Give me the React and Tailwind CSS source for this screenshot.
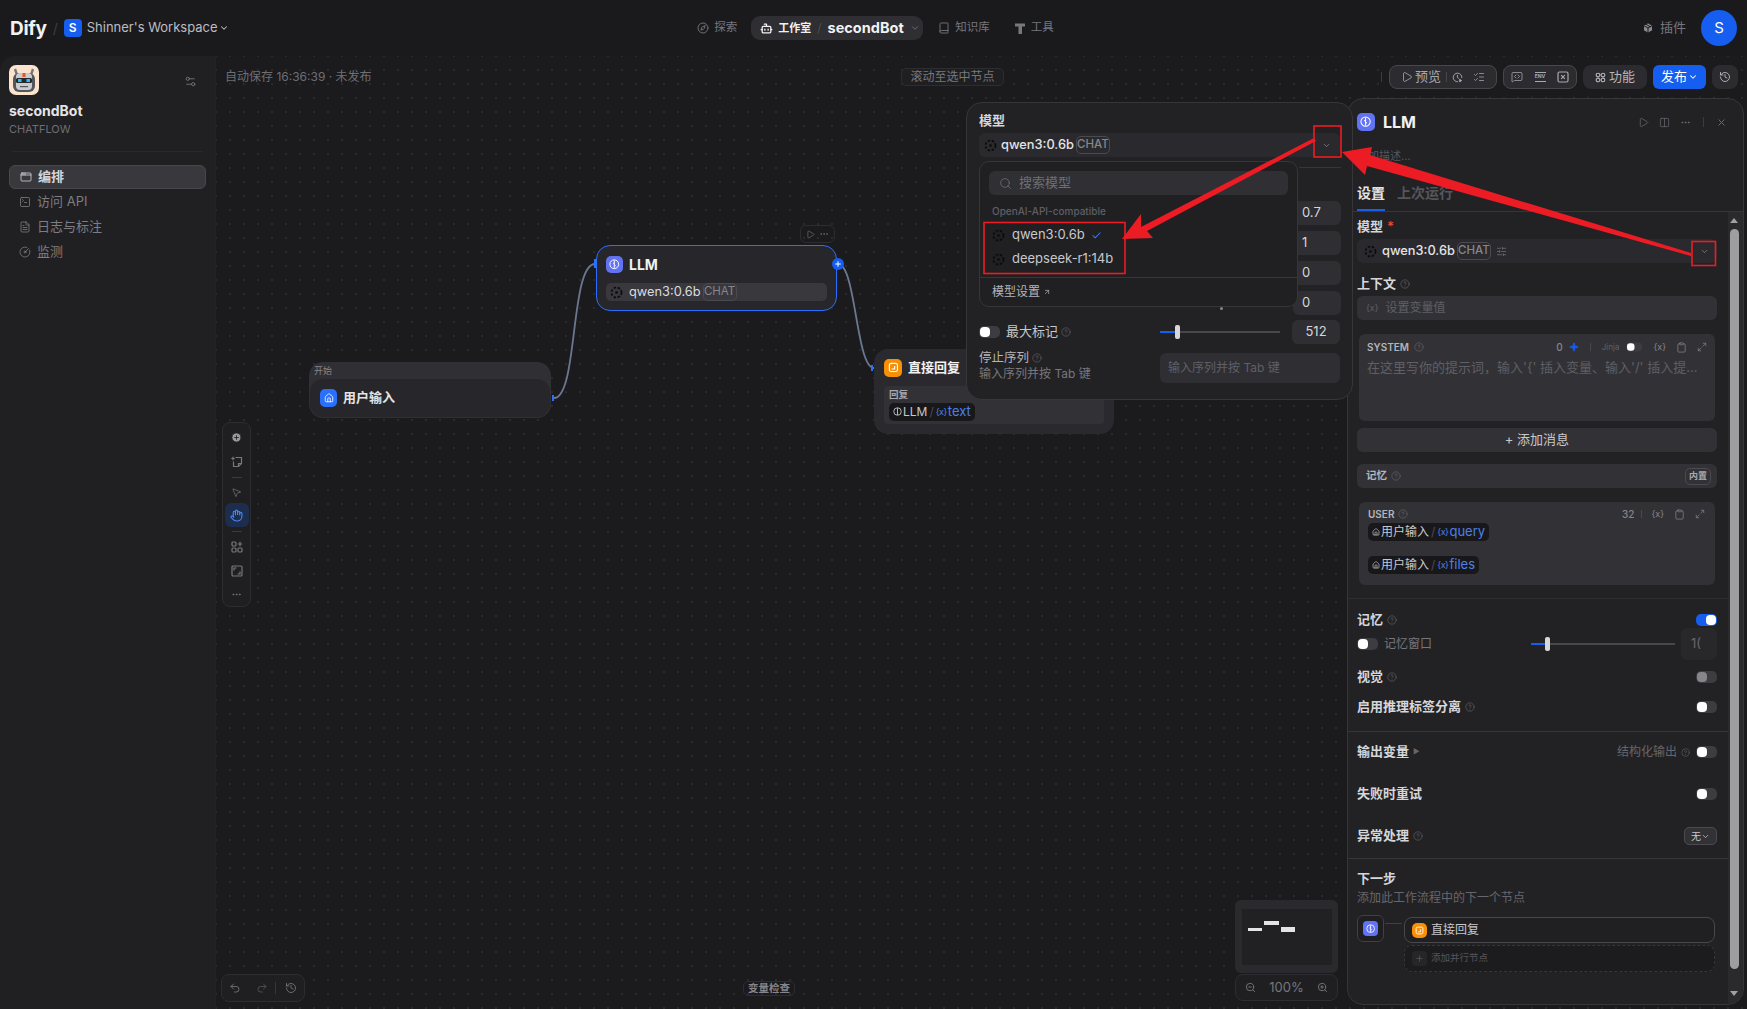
import {
  AppWindow,
  ArrowUpRight,
  Book,
  Bot,
  Check,
  ChevronDown,
  CircleGauge,
  CircleHelp,
  CirclePlus,
  Clipboard,
  Columns2,
  Compass,
  Ellipsis,
  FileText,
  Hand,
  History,
  House,
  ListChecks,
  Maximize2,
  MessageSquareCode,
  MousePointer2,
  Package,
  Play,
  Plus,
  Redo2,
  Search,
  Settings2,
  SlidersHorizontal,
  Sparkle,
  SquareTerminal,
  Undo2,
  X,
  ZoomIn,
  ZoomOut,
} from "lucide-react";

function ModelIcon({ size = 16 }) {
  return (
    <svg width={size} height={size} viewBox="0 0 16 16" fill="none" className="shrink-0">
      <circle cx="8" cy="8" r="6.2" stroke="#0b0b0d" strokeWidth="2" strokeDasharray="3 2" />
      <circle cx="8" cy="8" r="1.6" fill="#0b0b0d" />
    </svg>
  );
}

function LlmIcon({ size = 18, radius = "rounded-[5px]" }) {
  return (
    <span
      className={`flex shrink-0 items-center justify-center bg-[#6172f3] ${radius}`}
      style={{ width: size, height: size }}
    >
      <svg width={size * 0.62} height={size * 0.62} viewBox="0 0 12 12" fill="none" stroke="#fff">
        <circle cx="6" cy="6" r="5" strokeWidth="1.1" />
        <path d="M6 1.5v9M6 4l-1.5 1.5M6 6.5l1.5 1.2" strokeWidth="1.1" />
      </svg>
    </span>
  );
}

function AnswerIcon({ size = 18 }) {
  return (
    <span
      className="flex shrink-0 items-center justify-center rounded-[5px] bg-[#f79009]"
      style={{ width: size, height: size }}
    >
      <svg width={size * 0.6} height={size * 0.6} viewBox="0 0 12 12" fill="none" stroke="#fff" strokeWidth="1.2">
        <rect x="1.5" y="1.5" width="9" height="9" rx="2" />
        <path d="M4 7.8h3.4V4.4" />
      </svg>
    </span>
  );
}

function ToolsGlyph() {
  return (
    <svg width="12" height="13" viewBox="0 0 12 13" fill="#77777e">
      <path d="M1 1.5h10v3H8v7.5H4.5V4.5H1z" />
    </svg>
  );
}

function FeatureGlyph({ size = 12 }) {
  return (
    <svg width={size} height={size} viewBox="0 0 12 12" fill="none" stroke="currentColor" strokeWidth="1.2">
      <circle cx="3.3" cy="3.3" r="2" />
      <circle cx="8.7" cy="3.3" r="2" />
      <circle cx="3.3" cy="8.7" r="2" />
      <circle cx="8.7" cy="8.7" r="2" />
    </svg>
  );
}

function ClockPlay() {
  return (
    <svg width="13" height="13" viewBox="0 0 13 13" fill="none" stroke="currentColor" strokeWidth="1.1">
      <path d="M7 11.4A5 5 0 1 1 11.4 7" />
      <path d="M6.3 3.5v3l1.6 1" />
      <path d="M9 8.6v3l2.2-1.5z" fill="currentColor" />
    </svg>
  );
}

function BoxX() {
  return (
    <svg width="12" height="12" viewBox="0 0 12 12" fill="none" stroke="currentColor" strokeWidth="1.2">
      <rect x="1" y="1" width="10" height="10" rx="1.5" />
      <path d="M4.2 4.2l3.6 3.6M7.8 4.2L4.2 7.8" />
    </svg>
  );
}

function AddNote() {
  return (
    <svg width="12" height="12" viewBox="0 0 12 12" fill="none" stroke="currentColor" strokeWidth="1.2">
      <path d="M4.5 1.5h6v6l-3 3H2.5V5.5" />
      <path d="M7.5 10.5v-3h3M2 0.8v3.4M0.3 2.5h3.4" />
    </svg>
  );
}

function BlocksGlyph() {
  return (
    <svg width="12" height="12" viewBox="0 0 12 12" fill="none" stroke="currentColor" strokeWidth="1.2">
      <rect x="1" y="1" width="4" height="4" rx="1" />
      <rect x="1" y="7" width="4" height="4" rx="1" />
      <rect x="7" y="7" width="4" height="4" rx="1" />
      <path d="M9 0.8v4.4M6.8 3h4.4" />
    </svg>
  );
}

function FitGlyph() {
  return (
    <svg width="12" height="12" viewBox="0 0 12 12" fill="none" stroke="currentColor" strokeWidth="1.2">
      <rect x="1" y="1" width="10" height="10" rx="1" />
      <path d="M3 5.5V3h2.5M9 6.5V9H6.5" />
    </svg>
  );
}

function Help({ size = 12 }) {
  return <CircleHelp size={size} strokeWidth={1.5} className="shrink-0 text-[#66666c]" />;
}

function Chat() {
  return (
    <span className="flex h-[18px] w-[34px] shrink-0 items-center justify-center rounded-[5px] border border-[#4a4a50] text-[11.5px] text-[#86868c]">
      CHAT
    </span>
  );
}

function Toggle({ on = false, dim = false }) {
  return (
    <span
      className={`flex h-3 w-[21px] shrink-0 items-center rounded-[5px] px-[1px] ${
        on ? "justify-end bg-[#155eef]" : "justify-start bg-[#3c3c41]"
      }`}
    >
      <span className={`h-[10px] w-[10px] rounded-[4px] ${dim ? "bg-[#85858a]" : "bg-white"}`} />
    </span>
  );
}

function Slider({ width, at }) {
  return (
    <span className="relative flex h-3 shrink-0 items-center" style={{ width }}>
      <span className="h-[2px] w-full bg-[#47474c]" />
      <span className="absolute left-0 h-[2px] bg-[#155eef]" style={{ width: at }} />
      <span
        className="absolute h-[14px] w-[5px] rounded-[2px] bg-[#d8d8da]"
        style={{ left: at - 2 }}
      />
    </span>
  );
}

function VarTag({ icon, name, label }) {
  return (
    <span className="flex h-[18px] w-fit items-center gap-[1px] rounded-[5px] bg-[#18181b] px-[4px] text-[12px] text-[#c8c8cc]">
      {icon}
      <span>{name}</span>
      <span className="mx-[1px] text-[#4c4c52]">/</span>
      <span className="text-[9px] tracking-[-0.5px] text-[#4f80e8]">{"{x}"}</span>
      <span className="text-[13px] text-[#4f80e8]">{label}</span>
    </span>
  );
}

function NavItem({ icon: Icon, children, active = false }) {
  return (
    <div
      className={`flex h-6 items-center gap-[6px] rounded-[6px] px-[10px] text-[13px] ${
        active ? "border border-[#47474c] bg-[#38383d] font-semibold text-[#d6d6da]" : "text-[#7d7d84]"
      }`}
    >
      <Icon size={12} strokeWidth={1.6} />
      <span>{children}</span>
    </div>
  );
}

function TopLink({ icon, children }) {
  return (
    <div className="flex items-center gap-[5px] text-[11.5px] text-[#77777e]">
      {icon}
      <span>{children}</span>
    </div>
  );
}

function Header() {
  return (
    <header className="grid h-14 shrink-0 grid-cols-[1fr_auto_1fr] items-center bg-[#1a1a1d] pl-[10px] pr-[10px]">
      <div className="flex items-center">
        <span className="text-[19px] font-bold leading-none tracking-[-0.3px] text-[#f2f2f2]">Dify</span>
        <span className="mx-[6px] text-[14px] text-[#3d3d42]">/</span>
        <span className="flex h-[18px] w-[18px] items-center justify-center rounded-[4px] bg-[#155eef] text-[12px] font-semibold text-white">
          S
        </span>
        <span className="ml-[5px] text-[13px] text-[#bdbdc2]">Shinner's Workspace</span>
        <ChevronDown size={10} strokeWidth={2.5} className="ml-[1px] text-[#bdbdc2]" />
      </div>
      <div className="ml-[4px] flex items-center">
        <TopLink icon={<Compass size={12} strokeWidth={1.8} />}>探索</TopLink>
        <div className="ml-[14px] flex h-6 w-[172px] shrink-0 items-center rounded-[9px] bg-[#2f2f33] px-[9px] text-[#f2f2f2]">
          <Bot size={13} strokeWidth={2.4} className="shrink-0" />
          <span className="ml-[5px] text-[11px] font-semibold">工作室</span>
          <span className="mx-[6px] text-[12px] text-[#4c4c52]">/</span>
          <span className="text-[14.5px] font-bold">secondBot</span>
          <ChevronDown size={10} className="ml-[6px] shrink-0 text-[#77777e]" />
        </div>
        <div className="ml-[15px]">
          <TopLink icon={<Book size={12} strokeWidth={1.8} />}>知识库</TopLink>
        </div>
        <div className="ml-[24px]">
          <TopLink icon={<ToolsGlyph />}>工具</TopLink>
        </div>
      </div>
      <div className="flex items-center justify-end">
        <Package size={12} fill="#8a8a90" className="text-[#1a1a1d]" />
        <span className="ml-[6px] text-[13px] text-[#77777e]">插件</span>
        <span className="ml-[15px] flex h-9 w-9 items-center justify-center rounded-full bg-[#155eef] text-[15px] text-white">
          S
        </span>
      </div>
    </header>
  );
}

function Sidebar() {
  return (
    <aside className="flex w-[216px] shrink-0 flex-col rounded-tl-[14px] border-r border-[#232326] bg-[#202023]">
      <div className="flex items-start justify-between pl-[9px] pr-[18px] pt-[9px]">
        <svg width="30" height="30" viewBox="0 0 30 30" className="rounded-[7px]">
          <rect width="30" height="30" fill="#fbe3cd" />
          <path d="M6 4l2 6M24 4l-2 6" stroke="#77777c" strokeWidth="2.4" />
          <rect x="4" y="8" width="22" height="19" rx="6" fill="#54565b" />
          <rect x="7" y="8" width="16" height="17" rx="4" fill="#c9cbce" />
          <rect x="13.5" y="8" width="3" height="4" fill="#e4572e" />
          <rect x="7" y="13" width="16" height="5" rx="1.5" fill="#26282c" />
          <rect x="9" y="14" width="3.5" height="3" fill="#27c0e8" />
          <rect x="17.5" y="14" width="3.5" height="3" fill="#27c0e8" />
          <rect x="11" y="21" width="8" height="1.2" fill="#55575c" />
        </svg>
        <Settings2 size={13} strokeWidth={1.6} className="mt-[10px] text-[#77777e]" />
      </div>
      <div className="mt-[6px] pl-[9px] text-[14px] font-bold leading-5 text-[#e4e4e6]">secondBot</div>
      <div className="pl-[9px] text-[11px] leading-4 text-[#6e6e74]">CHATFLOW</div>
      <div className="mx-[12px] mt-[14px] h-px bg-[#2a2a2e]" />
      <nav className="mt-[13px] flex flex-col gap-[1px] pl-[9px] pr-[9px]">
        <NavItem icon={AppWindow} active>
          编排
        </NavItem>
        <NavItem icon={SquareTerminal}>访问 API</NavItem>
        <NavItem icon={FileText}>日志与标注</NavItem>
        <NavItem icon={CircleGauge}>监测</NavItem>
      </nav>
    </aside>
  );
}

function ToolGroup({ children, className = "" }) {
  return (
    <div className={`flex h-6 items-center rounded-[8px] border border-[#47474c] bg-[#2c2c30] text-[#a8a8ae] ${className}`}>
      {children}
    </div>
  );
}

function TopToolbar() {
  return (
    <div className="absolute right-[9px] top-[9px] flex items-center gap-[6px]">
      <span className="mr-[1px] h-[10px] w-px bg-[#3a3a3f]" />
      <ToolGroup className="w-[108px] px-[11px]">
        <Play size={12} strokeWidth={1.6} className="shrink-0" />
        <span className="ml-[2px] text-[13px]">预览</span>
        <span className="mx-[5px] h-[10px] w-px bg-[#47474c]" />
        <ClockPlay />
        <ListChecks size={12} strokeWidth={1.5} className="ml-[10px] shrink-0" />
      </ToolGroup>
      <ToolGroup className="w-[74px] justify-between px-[7px]">
        <MessageSquareCode size={12} strokeWidth={1.5} />
        <span className="flex h-[10px] w-[11px] items-center justify-center border-y border-[#a8a8ae] text-[5px] font-bold">
          ENV
        </span>
        <BoxX />
      </ToolGroup>
      <div className="flex h-6 w-16 items-center justify-center gap-[3px] rounded-[8px] bg-[#2c2c30] text-[13px] text-[#b4b4ba]">
        <FeatureGlyph size={11} />
        <span>功能</span>
      </div>
      <div className="flex h-6 w-[53px] items-center justify-center gap-[1px] rounded-[6px] bg-[#155eef] text-[13px] text-white">
        <span>发布</span>
        <ChevronDown size={10} strokeWidth={2.5} />
      </div>
      <div className="flex h-6 w-[26px] items-center justify-center rounded-[8px] bg-[#2c2c30] text-[#c0c0c5]">
        <History size={12} strokeWidth={1.7} />
      </div>
    </div>
  );
}

function SideTools() {
  return (
    <div className="absolute left-[6px] top-[366px] flex h-[185px] w-[29px] flex-col items-center rounded-[8px] border border-[#2d2d31] bg-[#1f1f22] pt-[9px] text-[#77777e]">
      <CirclePlus size={11} fill="#9a9a9e" className="text-[#26262a]" />
      <span className="mt-[13px]">
        <AddNote />
      </span>
      <span className="mt-[9px] h-px w-[10px] bg-[#3a3a3f]" />
      <MousePointer2 size={11} strokeWidth={1.5} className="mt-[9px]" />
      <span className="mt-[5px] flex h-6 w-6 items-center justify-center rounded-[6px] bg-[#1d2d4d] text-[#4c86f7]">
        <Hand size={13} strokeWidth={2} />
      </span>
      <span className="mt-[4px] h-px w-[10px] bg-[#3a3a3f]" />
      <span className="mt-[9px]">
        <BlocksGlyph />
      </span>
      <span className="mt-[12px]">
        <FitGlyph />
      </span>
      <Ellipsis size={11} className="mt-[12px]" />
    </div>
  );
}

function StartNode() {
  return (
    <div className="absolute left-[93px] top-[306px] flex h-14 w-[242px] flex-col rounded-[14px] bg-[#2f2f34] p-[1px]">
      <div className="h-4 pl-[4px] text-[9px] leading-4 text-[#85858b]">开始</div>
      <div className="flex flex-1 items-center gap-[6px] rounded-[13px] bg-[#27272b] pl-[10px]">
        <span className="flex h-[18px] w-[17px] items-center justify-center rounded-[5px] bg-[#2970ff]">
          <House size={10} className="text-white" />
        </span>
        <span className="text-[13px] font-semibold text-[#e4e4e6]">用户输入</span>
      </div>
    </div>
  );
}

function LlmNode() {
  return (
    <>
      <div className="absolute left-[584px] top-[169px] flex h-[18px] w-[35px] items-center justify-center gap-[4px] rounded-[6px] border border-[#2d2d31] text-[#66666c]">
        <Play size={9} />
        <Ellipsis size={10} />
      </div>
      <div className="absolute left-[380px] top-[189px] flex h-[66px] w-[241px] flex-col gap-[8px] rounded-[14px] border-[1.5px] border-[#2970ff] bg-[#27272b] px-[9px] pt-[8px]">
        <div className="flex items-center gap-[6px]">
          <LlmIcon size={17} />
          <span className="text-[14px] font-bold text-[#f2f2f2]">LLM</span>
        </div>
        <div className="flex h-[18px] items-center gap-[2px] rounded-[5px] bg-[#38383d] pl-[4px] text-[12.8px] text-[#dcdce0]">
          <ModelIcon size={13} />
          <span className="ml-[4px]">qwen3:0.6b</span>
          <Chat />
        </div>
      </div>
      <span className="absolute left-[616px] top-[202px] flex h-3 w-3 items-center justify-center rounded-full bg-[#155eef] text-white">
        <Plus size={8} strokeWidth={3} />
      </span>
      <span className="absolute left-[378px] top-[203px] h-[9px] w-[2px] bg-[#2970ff]" />
      <span className="absolute left-[336px] top-[339px] h-[6px] w-[2px] bg-[#2970ff]" />
    </>
  );
}

function AnswerNode() {
  return (
    <div className="absolute left-[658px] top-[293px] h-[85px] w-[240px] rounded-[14px] bg-[#2a2a2e] px-[10px] pt-[9px]">
      <span className="absolute -left-[3px] top-[16px] h-[6px] w-[2px] bg-[#2970ff]" />
      <div className="flex items-center gap-[6px]">
        <AnswerIcon size={18} />
        <span className="text-[13px] font-semibold text-[#f2f2f2]">直接回复</span>
      </div>
      <div className="mt-[8px] h-[38px] rounded-[4px] bg-[#323236] pl-[5px] pt-[1px]">
        <div className="text-[9.5px] font-semibold leading-[16px] text-[#a8a8ae]">回复</div>
        <VarTag icon={<LlmGlyph />} name="LLM" label="text" />
      </div>
    </div>
  );
}

function LlmGlyph() {
  return (
    <svg width="9" height="9" viewBox="0 0 12 12" fill="none" stroke="#c8c8cc" strokeWidth="1.2">
      <circle cx="6" cy="6" r="5" />
      <path d="M6 1.5v9" />
    </svg>
  );
}

function ParamRow({ value, top }) {
  return (
    <span
      className="absolute right-[11px] flex h-6 w-12 items-center rounded-[6px] bg-[#2f2f33] pl-[9px] text-[13px] text-[#d6d6da]"
      style={{ top }}
    >
      {value}
    </span>
  );
}

function ModelPopup() {
  return (
    <div className="absolute left-[750px] top-[46px] z-20 h-[298px] w-[387px] rounded-[16px] border border-[#36363a] bg-[#222225] px-[12px] pt-[8px]">
      <div className="text-[13px] font-semibold leading-[18px] text-[#d6d6da]">模型</div>
      <div className="mt-[4px] flex h-6 items-center rounded-[6px] bg-[#2a2a2e] pl-[5px] text-[12.8px] font-medium text-[#e4e4e6]">
        <ModelIcon size={13} />
        <span className="ml-[4px] mr-[2px]">qwen3:0.6b</span>
        <Chat />
        <ChevronDown size={9} className="ml-auto mr-[9px] text-[#85858b]" />
      </div>

      <ParamRow value="0.7" top={98} />
      <ParamRow value="1" top={128} />
      <ParamRow value="0" top={158} />
      <ParamRow value="0" top={188} />
      <span className="absolute right-[11px] top-[64px] h-px w-[42px] bg-[#36363a]" />
      <span className="absolute left-[253px] top-[204px] h-[3px] w-[3px] rounded-full bg-[#85858b]" />

      <div className="relative z-10 mt-[4px] flex h-[146px] w-[319px] flex-col rounded-[10px] border border-[#36363a] bg-[#202023]">
        <div className="mx-[9px] mt-[9px] flex h-6 items-center rounded-[6px] bg-[#303034] pl-[10px] text-[13px] text-[#6e6e74]">
          <Search size={13} strokeWidth={1.5} />
          <span className="ml-[7px]">搜索模型</span>
        </div>
        <div className="ml-[12px] mt-[9px] text-[10px] font-medium leading-[14px] text-[#5f5f66]">
          OpenAI-API-compatible
        </div>
        <div className="mt-[5px] flex h-6 items-center pl-[12px] text-[13px] text-[#c8c8cc]">
          <ModelIcon size={13} />
          <span className="ml-[7px]">qwen3:0.6b</span>
          <Check size={11} strokeWidth={2.2} className="ml-[6px] text-[#3b7bf6]" />
        </div>
        <div className="flex h-6 items-center pl-[12px] text-[13px] text-[#c8c8cc]">
          <ModelIcon size={13} />
          <span className="ml-[7px]">deepseek-r1:14b</span>
        </div>
        <div className="mt-[6px] h-px bg-[#36363a]" />
        <div className="flex flex-1 items-center gap-[3px] pl-[12px] text-[12px] text-[#b4b4ba]">
          <span>模型设置</span>
          <ArrowUpRight size={8} strokeWidth={2} />
        </div>
      </div>

      <div className="mt-[13px] flex h-6 items-center">
        <Toggle />
        <span className="ml-[6px] mr-[3px] text-[13px] text-[#c8c8cc]">最大标记</span>
        <Help size={10} />
        <span className="ml-auto mr-[12px]">
          <Slider width={120} at={17} />
        </span>
        <span className="flex h-6 w-12 items-center justify-center rounded-[6px] bg-[#2f2f33] text-[13px] text-[#d6d6da]">
          512
        </span>
      </div>
      <div className="mt-[5px] flex items-start">
        <div className="w-[181px]">
          <div className="flex items-center gap-[3px] text-[12.5px] leading-[17px] text-[#b4b4ba]">
            停止序列 <Help size={10} />
          </div>
          <div className="text-[12px] leading-[16px] text-[#77777e]">输入序列并按 Tab 键</div>
        </div>
        <div className="mt-[4px] flex h-[30px] flex-1 items-center rounded-[6px] bg-[#2f2f33] pl-[8px] text-[12px] text-[#5f5f66]">
          输入序列并按 Tab 键
        </div>
      </div>
    </div>
  );
}

function PanelRow({ label, help = true, right, className = "" }) {
  return (
    <div className={`flex h-5 items-center justify-between ${className}`}>
      <div className="flex items-center gap-[4px] text-[13px] font-semibold text-[#d6d6da]">
        {label}
        {help && <Help size={10} />}
      </div>
      {right}
    </div>
  );
}

function EditorIcons() {
  return (
    <div className="flex items-center gap-[10px] text-[#85858b]">
      <span className="text-[9px]">{"{x}"}</span>
      <Clipboard size={11} strokeWidth={1.6} />
      <Maximize2 size={10} strokeWidth={1.6} />
    </div>
  );
}

function LlmPanel() {
  return (
    <div className="absolute left-[1131px] top-[42px] z-10 flex h-[907px] w-[397px] flex-col rounded-[16px] border border-[#36363a] bg-[#222225]">
      <div className="shrink-0 px-[9px] pt-[14px]">
        <div className="flex h-[18px] items-center">
          <LlmIcon size={18} />
          <span className="ml-[8px] text-[16px] font-bold text-[#f2f2f2]">LLM</span>
          <div className="ml-auto flex items-center text-[#6e6e74]">
            <Play size={11} strokeWidth={1.5} />
            <Columns2 size={11} strokeWidth={1.5} className="ml-[10px]" />
            <Ellipsis size={11} className="ml-[10px]" />
            <span className="mx-[12px] h-[10px] w-px bg-[#3a3a3f]" />
            <X size={11} className="mr-[7px]" />
          </div>
        </div>
        <div className="mt-[15px] h-5 text-[11px] leading-5 text-[#55555b]">添加描述...</div>
        <div className="mt-[16px] flex h-[29px] gap-[12px] text-[14px] font-semibold">
          <span className="h-full border-b-[2px] border-[#155eef] text-[#e4e4e6]">设置</span>
          <span className="text-[#55555b]">上次运行</span>
        </div>
      </div>
      <div className="h-px shrink-0 bg-[#36363a]" />

      <div className="flex min-h-0 flex-1">
        <div className="min-w-0 flex-1 overflow-hidden pl-[9px] pr-[11px]">
          <div className="mt-[5px] flex h-5 items-center gap-[4px] text-[13px] font-semibold text-[#d6d6da]">
            模型 <span className="text-[#f04438]">*</span>
          </div>
          <div className="mt-[2px] flex h-6 items-center rounded-[6px] bg-[#2a2a2e] pl-[7px] text-[12.8px] font-medium text-[#e4e4e6]">
            <ModelIcon size={13} />
            <span className="ml-[5px] mr-[2px]">qwen3:0.6b</span>
            <Chat />
            <SlidersHorizontal size={11} strokeWidth={1.5} className="ml-[5px] text-[#77777e]" />
            <ChevronDown size={9} className="ml-auto mr-[8px] text-[#85858b]" />
          </div>

          <PanelRow label="上下文" className="mt-[11px]" />
          <div className="mt-[2px] flex h-6 items-center rounded-[6px] bg-[#323236] pl-[9px] text-[12px] text-[#5f5f66]">
            <span className="mr-[7px] text-[9px]">{"{x}"}</span>设置变量值
          </div>

          <div className="mx-[2px] mt-[14px] h-[87px] rounded-[6px] bg-[#323236] px-[8px] pt-[5px]">
            <div className="flex h-4 items-center justify-between">
              <div className="flex items-center gap-[5px] text-[10px] font-semibold text-[#b4b4ba]">
                SYSTEM <Help size={10} />
              </div>
              <div className="flex items-center">
                <span className="text-[10px] font-medium text-[#85858b]">0</span>
                <Sparkle size={10} fill="#155eef" className="ml-[6px] text-[#155eef]" />
                <span className="mx-[11px] h-[8px] w-px bg-[#47474c]" />
                <span className="mr-[2px] text-[8px] text-[#5f5f66]">Jinja</span>
                <span className="mr-[11px] origin-right scale-75">
                  <Toggle />
                </span>
                <EditorIcons />
              </div>
            </div>
            <div className="mt-[2px] text-[13px] leading-5 text-[#5f5f66]">
              在这里写你的提示词，输入'{"{"}' 插入变量、输入'/' 插入提...
            </div>
          </div>

          <div className="mt-[7px] flex h-6 items-center justify-center gap-[5px] rounded-[6px] bg-[#323236] text-[13px] text-[#c8c8cc]">
            + 添加消息
          </div>

          <div className="mt-[12px] flex h-6 items-center justify-between rounded-[6px] bg-[#323236] pl-[9px] pr-[6px]">
            <div className="flex items-center gap-[4px] text-[10.5px] font-semibold text-[#b4b4ba]">
              记忆 <Help size={10} />
            </div>
            <span className="flex h-[17px] w-[26px] items-center justify-center rounded-[5px] border border-[#4a4a50] text-[9px] font-semibold text-[#a8a8ae]">
              内置
            </span>
          </div>

          <div className="mx-[2px] mt-[14px] h-[83px] rounded-[6px] bg-[#323236] px-[9px] pt-[4px]">
            <div className="flex h-4 items-center justify-between pr-[1px]">
              <div className="flex items-center gap-[4px] text-[10px] font-semibold text-[#b4b4ba]">
                USER <Help size={10} />
              </div>
              <div className="flex items-center">
                <span className="text-[10px] font-medium text-[#85858b]">32</span>
                <span className="ml-[7px] mr-[9px] h-[8px] w-px bg-[#47474c]" />
                <EditorIcons />
              </div>
            </div>
            <div className="mt-[1px]">
              <VarTag icon={<House size={8} />} name="用户输入" label="query" />
            </div>
            <div className="mt-[15px]">
              <VarTag icon={<House size={8} />} name="用户输入" label="files" />
            </div>
          </div>

          <div className="-ml-[9px] -mr-[11px] mt-[13px] h-px bg-[#2d2d31]" />

          <PanelRow label="记忆" className="mt-[11px]" right={<Toggle on />} />
          <div className="-mt-[2px] flex h-8 items-center">
            <Toggle />
            <span className="ml-[6px] text-[12px] text-[#77777e]">记忆窗口</span>
            <span className="ml-auto mr-[6px]">
              <Slider width={144} at={16} />
            </span>
            <span className="flex h-8 w-9 items-center rounded-[6px] bg-[#28282b] pl-[10px] text-[13px] text-[#66666c]">
              1(
            </span>
          </div>
          <PanelRow label="视觉" className="mt-[7px]" right={<Toggle dim />} />
          <PanelRow label="启用推理标签分离" className="mt-[10px]" right={<Toggle />} />

          <div className="-ml-[9px] -mr-[11px] mt-[14px] h-px bg-[#36363a]" />

          <PanelRow
            label={
              <>
                输出变量
                <span className="text-[7px] text-[#66666c]">▶</span>
              </>
            }
            help={false}
            className="mt-[10px]"
            right={
              <div className="flex items-center gap-[4px] text-[12px] text-[#66666c]">
                结构化输出
                <Help size={9} />
                <span className="ml-[2px]">
                  <Toggle />
                </span>
              </div>
            }
          />
          <PanelRow label="失败时重试" help={false} className="mt-[22px]" right={<Toggle />} />
          <PanelRow
            label="异常处理"
            className="mt-[22px]"
            right={
              <span className="flex h-[18px] w-[33px] items-center justify-center rounded-[5px] border border-[#4a4a50] bg-[#323236] text-[10px] text-[#c8c8cc]">
                无<ChevronDown size={9} />
              </span>
            }
          />

          <div className="-ml-[9px] -mr-[11px] mt-[12px] h-px bg-[#36363a]" />

          <div className="mt-[9px] text-[13px] font-semibold leading-5 text-[#d6d6da]">下一步</div>
          <div className="mt-[1px] text-[12px] leading-[18px] text-[#66666c]">添加此工作流程中的下一个节点</div>

          <div className="mt-[8px] flex items-start">
            <span className="flex h-[27px] w-[27px] shrink-0 items-center justify-center rounded-[6px] border border-[#3f3f44] bg-[#1f1f22]">
              <LlmIcon size={15} radius="rounded-[4px]" />
            </span>
            <span className="ml-[1px] mr-[2px] mt-[8px] h-px w-[17px] bg-[#3f3f44]" />
            <div className="mt-[2px] flex flex-1 flex-col gap-[2px] pr-[2px]">
              <div className="flex h-[26px] items-center gap-[4px] rounded-[8px] border border-[#47474c] bg-[#202023] pl-[7px] text-[12px] text-[#c8c8cc]">
                <AnswerIcon size={15} />
                直接回复
              </div>
              <div className="flex h-[27px] items-center gap-[4px] rounded-[8px] border border-dashed border-[#36363a] bg-[#1c1c1f] pl-[7px] text-[9.5px] text-[#55555b]">
                <span className="flex h-[15px] w-[15px] items-center justify-center rounded-[4px] bg-[#26262a]">
                  <Plus size={9} />
                </span>
                添加并行节点
              </div>
            </div>
          </div>
        </div>

        <div className="flex w-[15px] shrink-0 flex-col items-center rounded-br-[16px] bg-[#2a2a2d] pr-[3px]">
          <span className="mt-[6px] h-0 w-0 border-x-[4px] border-b-[5px] border-x-transparent border-b-[#a0a0a0]" />
          <span className="mt-[6px] h-[740px] w-[9px] shrink-0 rounded-full bg-[#9e9e9e]" />
          <span className="mt-[22px] h-0 w-0 border-x-[4px] border-t-[5px] border-x-transparent border-t-[#a0a0a0]" />
        </div>
      </div>
    </div>
  );
}

function BottomBits() {
  return (
    <>
      <div className="absolute left-[5px] top-[918px] flex h-7 w-[84px] items-center rounded-[8px] border border-[#2d2d31] bg-[#1f1f22] pl-[7px] text-[#77777e]">
        <Undo2 size={12} strokeWidth={1.7} />
        <Redo2 size={12} strokeWidth={1.7} className="ml-[15px] text-[#55555b]" />
        <span className="ml-[7px] mr-[9px] h-[12px] w-px bg-[#36363a]" />
        <History size={12} strokeWidth={1.7} />
      </div>
      <div className="absolute left-[527px] top-[925px] flex h-[15px] w-[52px] items-center justify-center rounded-[5px] border border-[#2d2d31] text-[10.5px] font-semibold text-[#85858b]">
        变量检查
      </div>
      <div className="absolute left-[1019px] top-[844px] flex h-[73px] w-[103px] items-center justify-center rounded-[6px] bg-[#2a2a2e]">
        <div className="relative h-[56px] w-[90px] bg-[#212124]">
          <span className="absolute left-[6px] top-[19px] h-[3px] w-[14px] bg-[#e4e4e6]" />
          <span className="absolute left-[22px] top-[12px] h-[4px] w-[15px] bg-[#e4e4e6]" />
          <span className="absolute left-[39px] top-[18px] h-[5px] w-[14px] bg-[#e4e4e6]" />
        </div>
      </div>
      <div className="absolute left-[1019px] top-[918px] flex h-[27px] w-[103px] items-center justify-between rounded-[8px] border border-[#2d2d31] bg-[#1f1f22] px-[9px] text-[#77777e]">
        <ZoomOut size={11} />
        <span className="text-[13px]">100%</span>
        <ZoomIn size={11} />
      </div>
    </>
  );
}

function Edges() {
  return (
    <svg className="absolute left-0 top-0" width="900" height="500" fill="none">
      <path d="M338 342C362 342 354 208 379 208" stroke="#6b7690" strokeWidth="1.8" />
      <path d="M622 208C640 208 640 312 658 312" stroke="#6b7690" strokeWidth="1.8" />
    </svg>
  );
}

function Annotations() {
  return (
    <svg className="pointer-events-none absolute left-0 top-0 z-30" width="1747" height="1009" fill="none">
      <rect x="1314" y="126" width="27" height="31" stroke="#ed1c24" strokeWidth="1.6" />
      <rect x="984" y="222.5" width="141" height="51" stroke="#ed1c24" strokeWidth="1.6" />
      <rect x="1692" y="241.5" width="23.5" height="24" stroke="#ed1c24" strokeWidth="1.6" />
      <polygon points="1122,239 1141,214 1141,227 1314,138 1316,141 1147,231 1153,238" fill="#ed1c24" />
      <polygon points="1342,152 1372,147 1370,155 1691,253 1691,256 1367,166 1365,175" fill="#ed1c24" />
    </svg>
  );
}

export default function App() {
  return (
    <div className="relative flex h-[1009px] w-full flex-col overflow-hidden whitespace-nowrap bg-[#1a1a1d] font-[Inter,'Noto_Sans_CJK_SC',sans-serif]">
      <Header />
      <div className="flex min-h-0 flex-1">
        <Sidebar />
        <main className="relative flex-1 bg-[#1b1b1e] bg-[radial-gradient(circle,#2a2a2f_1px,transparent_1.2px)] bg-[size:14px_14px] bg-[position:7px_7px]">
          <div className="absolute left-[9px] top-[12px] text-[12px] leading-[18px] text-[#6e6e74]">
            自动保存 16:36:39 · 未发布
          </div>
          <div className="absolute left-[685px] top-[12px] flex h-[18px] w-[103px] items-center justify-center rounded-[5px] border border-[#2d2d31] bg-[#1f1f22] text-[12px] text-[#77777e]">
            滚动至选中节点
          </div>
          <TopToolbar />
          <SideTools />
          <Edges />
          <StartNode />
          <LlmNode />
          <AnswerNode />
          <BottomBits />
          <ModelPopup />
          <LlmPanel />
        </main>
      </div>
      <Annotations />
    </div>
  );
}
